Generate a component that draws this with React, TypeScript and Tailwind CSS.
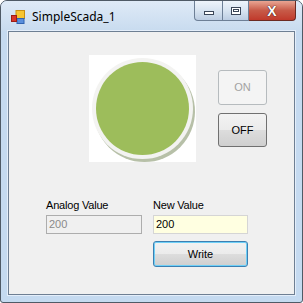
import React from 'react';

const ui = { fontFamily: '"Liberation Sans", Arial, sans-serif' };

const AppIcon = () => (
  <svg width="14" height="14" viewBox="0 0 14 14" className="shrink-0">
    <rect x="5" y="0.5" width="8.5" height="8" fill="#f7c531" stroke="#c98f10" />
    <rect x="6" y="8.5" width="7" height="5" fill="#5a8fdc" stroke="#2f62b0" />
    <rect x="0.5" y="5.5" width="5" height="6" fill="#d8352a" stroke="#9c1d16" />
  </svg>
);

const CaptionButtons = () => (
  <div className="flex h-[20px] self-start">
    <div className="w-[29px] h-full flex items-center justify-center border border-t-0 border-[#6d7f96] rounded-bl-[4px] bg-gradient-to-b from-[#eef4fb] via-[#d8e4f1] to-[#bccde2]">
      <div className="w-[10px] h-[4px] border border-[#3a4658] bg-white mt-[4px]" />
    </div>
    <div className="w-[26px] h-full flex items-center justify-center border border-t-0 border-l-0 border-[#6d7f96] bg-gradient-to-b from-[#eef4fb] via-[#d8e4f1] to-[#bccde2]">
      <div className="w-[10px] h-[8px] border border-[#3a4658] bg-white flex items-center justify-center">
        <div className="w-[6px] h-[3px] border border-[#3a4658]" />
      </div>
    </div>
    <div className="w-[47px] h-full flex items-center justify-center border border-t-0 border-l-0 border-[#6b2a22] rounded-br-[4px] bg-gradient-to-b from-[#e8a593] via-[#c75a48] to-[#c0392b]">
      <span className="text-white font-bold text-[14px] leading-none" style={{ ...ui, textShadow: '0 0 1px #3b1510, 0 0 1px #3b1510' }}>
        X
      </span>
    </div>
  </div>
);

const Lamp = () => (
  <div className="w-[107px] h-[107px] bg-white flex items-center justify-center">
    <div className="w-[101px] h-[101px] rounded-full bg-[#f3f3f1] flex items-center justify-center shadow-[2px_3px_0_#b7c0a8]">
      <div className="w-[93px] h-[93px] rounded-full bg-[#9dbd5b]" />
    </div>
  </div>
);

export default function App() {
  return (
    <div className="w-[303px] h-[303px] overflow-hidden bg-white" style={ui}>
      <div className="w-full h-full flex flex-col rounded-t-[7px] rounded-b-[3px] border border-[#4f5a66] bg-[#c5daf0]">
        {/* title bar */}
        <div className="h-[30px] flex items-start pl-[10px] pr-[6px] bg-gradient-to-b from-[#dfeaf7] to-[#c8dbef] rounded-t-[6px]">
          <div className="flex items-center gap-[7px] mt-[9px]">
            <AppIcon />
            <span
              className="text-[12px] text-black leading-none"
              style={{ fontFamily: '"Noto Sans", "Open Sans", sans-serif' }}
            >
              SimpleScada_1
            </span>
          </div>
          <div className="flex-1" />
          <CaptionButtons />
        </div>

        {/* client area */}
        <div className="mx-[7px] mb-[7px] flex-1 border border-[#6e7f93] bg-[#f0f0f0] shadow-[0_0_0_1px_#e4eefa]">
          <div className="flex mt-[23px] ml-[80px]">
            <Lamp />
            <div className="flex flex-col ml-[22px] mt-[15px] gap-[8px]">
              <button className="w-[49px] h-[35px] rounded-[3px] border border-[#b6bbbe] bg-[#f4f4f4] text-[11px] text-[#a2a2a2]">
                ON
              </button>
              <button className="w-[49px] h-[34px] rounded-[3px] border border-[#707070] text-[11px] text-black bg-[linear-gradient(to_bottom,#f3f3f3_0%,#ebebeb_50%,#dddddd_50%,#cfcfcf_100%)]">
                OFF
              </button>
            </div>
          </div>

          <div className="flex mt-[37px] ml-[37px] gap-[11px]">
            <div className="flex flex-col">
              <span className="text-[11px] text-black leading-[13px] tracking-[-0.2px]">Analog Value</span>
              <div className="mt-[3px] w-[96px] h-[19px] border border-[#adadad] bg-[#f0f0f0] text-[11px] text-[#8a8a8a] px-[2px] flex items-center">
                200
              </div>
            </div>
            <div className="flex flex-col">
              <span className="text-[11px] text-black leading-[13px] tracking-[-0.2px]">New Value</span>
              <div className="mt-[3px] w-[95px] h-[19px] border border-[#d5d5d5] bg-[#ffffe1] text-[11px] text-black px-[2px] flex items-center">
                200
              </div>
              <button className="mt-[7px] w-[95px] h-[26px] rounded-[3px] border border-[#3c7fb1] shadow-[inset_0_0_0_1px_#6fd0f7] text-[11px] text-black bg-[linear-gradient(to_bottom,#f2f2f2_0%,#ebebeb_50%,#dddddd_50%,#cfcfcf_100%)]">
                Write
              </button>
            </div>
          </div>
        </div>
      </div>
    </div>
  );
}
